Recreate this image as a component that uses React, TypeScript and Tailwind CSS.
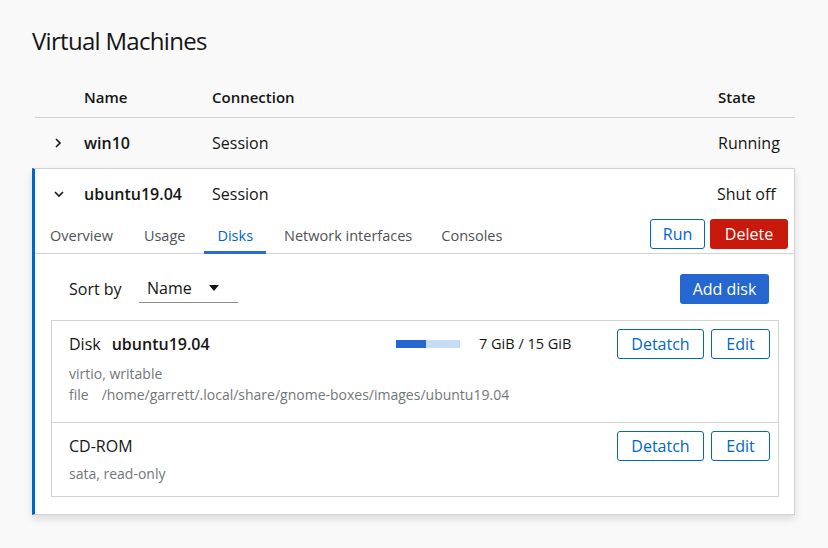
import React from "react";

const font = { fontFamily: '"Open Sans", "Liberation Sans", sans-serif' };

function ChevronRight() {
  return (
    <svg width="10" height="12" viewBox="0 0 10 12" className="block">
      <path d="M3 2 L7 6 L3 10" fill="none" stroke="#151515" strokeWidth="1.6" />
    </svg>
  );
}
function ChevronDown() {
  return (
    <svg width="12" height="10" viewBox="0 0 12 10" className="block">
      <path d="M2 3 L6 7 L10 3" fill="none" stroke="#151515" strokeWidth="1.6" />
    </svg>
  );
}

function OutlineBtn({ children, w }: { children: React.ReactNode; w: string }) {
  return (
    <button
      className={`${w} h-[30px] rounded-[3px] border border-[#0066cc] bg-white text-[16px] text-[#0066cc] flex items-center justify-center`}
    >
      {children}
    </button>
  );
}

export default function App() {
  return (
    <div className="w-[828px] h-[548px] bg-[#f9f9f9] overflow-hidden text-[#151515]" style={font}>
      <h1 className="pl-[32px] pt-[24px] text-[24px] tracking-[-0.7px] leading-[34px] font-normal">Virtual Machines</h1>

      <div className="ml-[32px] w-[763px] mt-[19px]">
        {/* header */}
        <div className="ml-[3px] h-[41px] flex items-center border-b border-[#d2d2d2] text-[15px] font-semibold">
          <div className="w-[49px]" />
          <div className="w-[128px]">Name</div>
          <div className="flex-1">Connection</div>
          <div className="w-[77px]">State</div>
        </div>
        {/* win10 */}
        <div className="ml-[3px] h-[50px] flex items-center text-[16px]">
          <div className="w-[49px] flex justify-center pr-[4px]">
            <ChevronRight />
          </div>
          <div className="w-[128px] font-semibold">win10</div>
          <div className="flex-1">Session</div>
          <div className="w-[77px]">Running</div>
        </div>
        {/* expanded card */}
        <div className="bg-white border border-[#d2d2d2] border-l-[3px] border-l-[#0066cc] shadow-[0_4px_8px_rgba(3,3,3,0.12)] h-[347px]">
          <div className="h-[49px] flex items-center text-[16px]">
            <div className="w-[49px] flex justify-center pr-[2px]">
              <ChevronDown />
            </div>
            <div className="w-[128px] font-semibold">ubuntu19.04</div>
            <div className="flex-1">Session</div>
            <div className="w-[77px]">Shut off</div>
          </div>
          {/* tabs */}
          <div className="h-[36px] flex items-stretch border-b border-[#d2d2d2] text-[14.5px] text-[#4f5255]">
            <div className="flex pl-[2px]">
              <div className="pl-[13px] pr-[15px] flex items-center">Overview</div>
              <div className="pl-[16px] pr-[19px] flex items-center">Usage</div>
              <div className="px-[13px] flex items-center text-[#0066cc] border-b-[3px] border-[#2b6bd6] pt-[3px] -mb-[1px]">Disks</div>
              <div className="pl-[18px] pr-[16px] flex items-center">Network interfaces</div>
              <div className="pl-[13px] pr-[16px] flex items-center">Consoles</div>
            </div>
            <div className="flex-1" />
            <div className="flex items-start pt-[1px] gap-[5px] pr-[6px]">
              <OutlineBtn w="w-[55px]">Run</OutlineBtn>
              <button className="w-[78px] h-[30px] rounded-[3px] bg-[#c9190b] text-white text-[16px]">Delete</button>
            </div>
          </div>
          {/* body */}
          <div className="pl-[16px] pr-[16px] pt-[19px]">
            <div className="flex items-center pl-[18px] pr-[9px] h-[31px]">
              <span className="text-[16px] w-[70px]">Sort by</span>
              <div className="w-[99px] h-[28px] border-b border-[#8a8d90] flex items-center justify-between pl-[8px] pr-[19px] text-[16px]">
                <span>Name</span>
                <svg width="10" height="6" viewBox="0 0 10 6">
                  <path d="M0 0 L10 0 L5 6 Z" fill="#151515" />
                </svg>
              </div>
              <div className="flex-1" />
              <button className="w-[89px] h-[30px] rounded-[3px] bg-[#2566d0] text-white text-[16px]">Add disk</button>
            </div>
            {/* disk list */}
            <div className="mt-[16px] border border-[#d2d2d2] w-[728px]">
              <div className="h-[102px] border-b border-[#d2d2d2] pl-[17px] pr-[8px] pt-[8px]">
                <div className="flex items-center h-[30px]">
                  <span className="text-[16px]">Disk</span>
                  <span className="text-[16px] font-semibold ml-[11px]">ubuntu19.04</span>
                  <div className="flex-1" />
                  <div className="w-[64px] h-[8px] bg-[#c5dcf2] flex">
                    <div className="w-[30px] h-full bg-[#2566d0]" />
                  </div>
                  <span className="text-[14.5px] ml-[19px] w-[138px]">7 GiB / 15 GiB</span>
                  <div className="flex gap-[7px]">
                    <OutlineBtn w="w-[87px]">Detatch</OutlineBtn>
                    <OutlineBtn w="w-[59px]">Edit</OutlineBtn>
                  </div>
                </div>
                <div className="mt-[4px] text-[14px] leading-[21px] text-[#737679]">
                  <div>virtio, writable</div>
                  <div>
                    file<span className="ml-[13px]">/home/garrett/.local/share/gnome-boxes/images/ubuntu19.04</span>
                  </div>
                </div>
              </div>
              <div className="h-[73px] pl-[17px] pr-[8px] pt-[8px]">
                <div className="flex items-center h-[30px]">
                  <span className="text-[16px]">CD-ROM</span>
                  <div className="flex-1" />
                  <div className="flex gap-[7px]">
                    <OutlineBtn w="w-[87px]">Detatch</OutlineBtn>
                    <OutlineBtn w="w-[59px]">Edit</OutlineBtn>
                  </div>
                </div>
                <div className="mt-[2px] text-[14px] leading-[21px] text-[#737679]">sata, read-only</div>
              </div>
            </div>
          </div>
        </div>
      </div>
    </div>
  );
}
